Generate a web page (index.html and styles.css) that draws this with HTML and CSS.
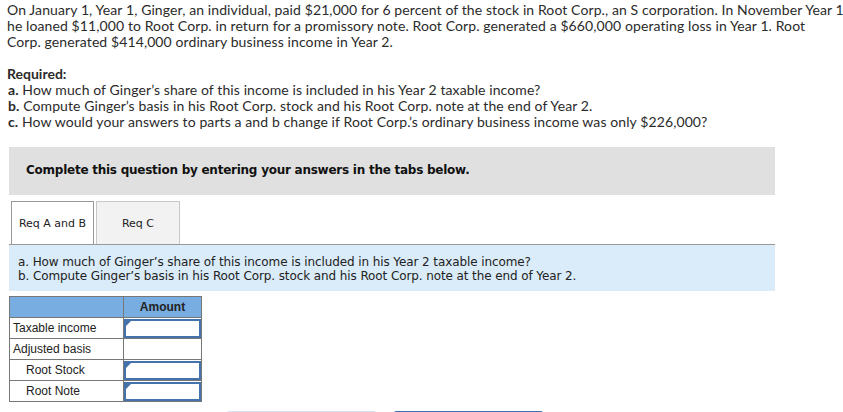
FILE: index.html
```html
<!DOCTYPE html>
<html>
<head>
<meta charset="utf-8">
<link rel="stylesheet" href="styles.css">
</head>
<body>
<div class="page">
  <p class="intro">On January 1, Year 1, Ginger, an individual, paid $21,000 for 6 percent of the stock in Root Corp., an S corporation. In November Year 1,<br>he loaned $11,000 to Root Corp. in return for a promissory note. Root Corp. generated a $660,000 operating loss in Year 1. Root<br>Corp. generated $414,000 ordinary business income in Year 2.</p>
  <p class="req-title">Required:</p>
  <ul class="req-list">
    <li><b>a.</b> How much of Ginger’s share of this income is included in his Year 2 taxable income?</li>
    <li><b>b.</b> Compute Ginger’s basis in his Root Corp. stock and his Root Corp. note at the end of Year 2.</li>
    <li><b>c.</b> How would your answers to parts a and b change if Root Corp.’s ordinary business income was only $226,000?</li>
  </ul>
  <div class="complete">Complete this question by entering your answers in the tabs below.</div>
  <div class="tabs">
    <div class="tab active">Req A and B</div>
    <div class="tab">Req C</div>
  </div>
  <div class="panel">a. How much of Ginger’s share of this income is included in his Year 2 taxable income?<br>b. Compute Ginger’s basis in his Root Corp. stock and his Root Corp. note at the end of Year 2.</div>
  <table class="grid">
    <tr class="head"><th class="lab"></th><th class="amt">Amount</th></tr>
    <tr><td class="lab">Taxable income</td><td class="inp"><div class="box"><span class="tri"></span></div></td></tr>
    <tr><td class="lab">Adjusted basis</td><td class="blank"></td></tr>
    <tr><td class="lab ind">Root Stock</td><td class="inp"><div class="box"><span class="tri"></span></div></td></tr>
    <tr><td class="lab ind">Root Note</td><td class="inp"><div class="box"><span class="tri"></span></div></td></tr>
  </table>
  <div class="buttons">
    <div class="btn prev"></div>
    <div class="btn next"></div>
  </div>
</div>
</body>
</html>
```
FILE: styles.css
```css
html, body {
  margin: 0;
  padding: 0;
  background: #fff;
  overflow: hidden;
}
.page {
  padding: 2px 0 0 7px;
  color: #2b2b2b;
}
.intro {
  margin: 0;
  font-family: Lato, "Open Sans", sans-serif;
  font-size: 14px;
  line-height: 16px;
  letter-spacing: 0.1px;
  white-space: nowrap;
}
.req-title {
  margin: 16px 0 0 0;
  font-family: Lato, sans-serif;
  font-weight: bold;
  font-size: 14px;
  line-height: 16px;
}
.req-list {
  list-style: none;
  margin: 0;
  padding: 0 0 0 1px;
  font-family: Lato, sans-serif;
  font-size: 14px;
  line-height: 16px;
  letter-spacing: 0.1px;
  white-space: nowrap;
}
.complete {
  margin: 17px 0 0 2px;
  width: 749px;
  height: 48px;
  padding-left: 17px;
  background: #e0e0e0;
  font-family: "DejaVu Sans", Verdana, sans-serif;
  font-weight: bold;
  font-size: 12px;
  letter-spacing: -0.25px;
  line-height: 46px;
  color: #111;
}
.tabs {
  display: flex;
  gap: 2px;
  margin: 6px 0 0 4px;
}
.tab {
  height: 43px;
  line-height: 44px;
  font-family: "DejaVu Sans", Verdana, sans-serif;
  font-size: 11px;
  color: #222;
  text-align: center;
  box-sizing: border-box;
  width: 84px;
  background: #f2f2f2;
  border: 1px solid #c8c8c8;
  border-bottom: none;
}
.tab.active {
  width: 83px;
  background: #fff;
  border-color: #999;
}
.panel {
  margin-left: 2px;
  width: 757px;
  border-top: 1px solid #999;
  background: #daecf9;
  padding: 10px 0 8px 9px;
  font-family: "DejaVu Sans", Verdana, sans-serif;
  font-size: 12px;
  letter-spacing: -0.1px;
  line-height: 14px;
  color: #222;
  white-space: nowrap;
}
.grid {
  margin: 5px 0 0 2px;
  border-collapse: collapse;
  font-family: "Liberation Sans", Arial, sans-serif;
  font-size: 12px;
  color: #222;
}
.grid th, .grid td {
  border: 1px solid #777;
  padding: 0;
  height: 20px;
}
.grid .head th {
  background: #78ade2;
  font-weight: bold;
  text-align: center;
}
.grid .lab {
  width: 110px;
  padding-left: 3px;
  text-align: left;
}
.grid .lab.ind {
  padding-left: 16px;
  width: 97px;
}
.grid .amt, .grid .inp, .grid .blank {
  width: 77px;
}
.box {
  position: relative;
  height: 15px;
  border: 2px solid #4373aa;
  margin: 0;
}
.tri {
  position: absolute;
  left: 0;
  top: 0;
  width: 0;
  height: 0;
  border-top: 5px solid #4373aa;
  border-right: 5px solid transparent;
}
.buttons {
  display: flex;
  gap: 18px;
  margin: 9px 0 0 220px;
}
.btn {
  width: 149px;
  height: 30px;
  border-radius: 2px;
}
.btn.prev { background: #d7e3f1; }
.btn.next { background: #3b73b5; }
```
